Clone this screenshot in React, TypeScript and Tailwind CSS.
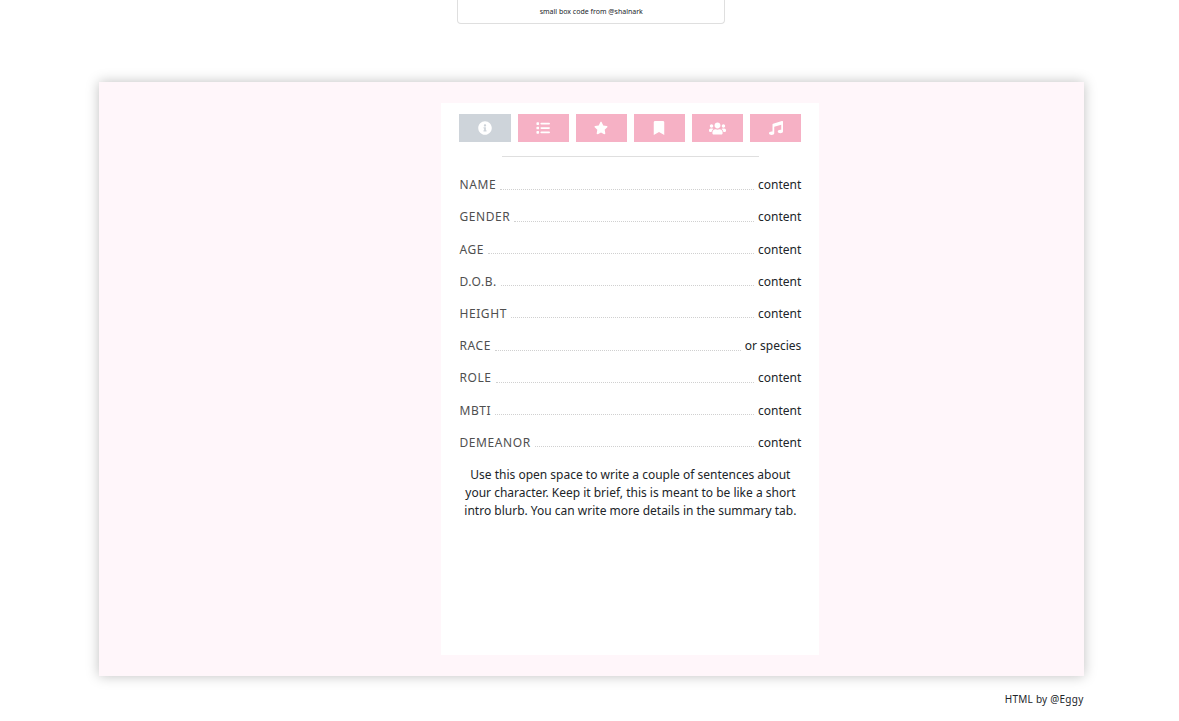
import { useState } from 'react'
import type { IconType } from 'react-icons'
import { FaBookmark, FaInfoCircle, FaMusic, FaStar, FaUsers } from 'react-icons/fa'
import { FaList } from 'react-icons/fa6'

interface Tab {
  id: string
  label: string
  icon: IconType
  iconClass?: string
}

const TABS: Tab[] = [
  { id: 'info', label: 'Info', icon: FaInfoCircle },
  { id: 'summary', label: 'Summary', icon: FaList },
  { id: 'traits', label: 'Traits', icon: FaStar },
  { id: 'story', label: 'Story', icon: FaBookmark },
  { id: 'links', label: 'Relationships', icon: FaUsers, iconClass: 'size-[17px]' },
  { id: 'music', label: 'Music', icon: FaMusic },
]

const FIELDS = [
  { label: 'NAME', value: 'content' },
  { label: 'GENDER', value: 'content' },
  { label: 'AGE', value: 'content' },
  { label: 'D.O.B.', value: 'content' },
  { label: 'HEIGHT', value: 'content' },
  { label: 'RACE', value: 'or species' },
  { label: 'ROLE', value: 'content' },
  { label: 'MBTI', value: 'content' },
  { label: 'DEMEANOR', value: 'content' },
]

function InfoPanel() {
  return (
    <>
      <dl className="flex h-[290px] flex-col">
        {FIELDS.map(({ label, value }) => (
          <div key={label} className="flex flex-1 items-center gap-1">
            <dt className="tracking-wider text-[#4f4f4f]">{label}</dt>
            <span className="mt-2 flex-1 border-b border-dotted border-[#d0d0d0]" />
            <dd>{value}</dd>
          </div>
        ))}
      </dl>
      <p className="mt-[7px] text-center">
        Use this open space to write a couple of sentences about your character. Keep it brief, this
        is meant to be like a short intro blurb. You can write more details in the summary tab.
      </p>
    </>
  )
}

export default function App() {
  const [active, setActive] = useState('info')

  return (
    <div className="flex flex-col bg-white pr-[8.1%] pl-[8.4%] font-['Noto_Sans','Open_Sans',sans-serif] text-[12px] leading-[18px] text-[#212529]">
      <header className="flex h-6 w-[268px] items-center justify-center self-center rounded-b border border-t-0 border-[#dfdfdf] text-[7px]">
        <p>
          small box code from <a href="#shalnark">@shalnark</a>
        </p>
      </header>

      <main className="mt-[58px] bg-[#fff6fa] p-[21px] shadow-[0_0_12px_rgba(0,0,0,0.25)]">
        <section className="ml-[34.1%] min-h-[552px] w-[40.1%] bg-white px-[18px] pt-[11px]">
          <div role="tablist" aria-label="Profile" className="grid grid-cols-6 gap-[7px]">
            {TABS.map(({ id, label, icon: Icon, iconClass }) => (
              <button
                key={id}
                type="button"
                role="tab"
                aria-label={label}
                aria-selected={active === id}
                onClick={() => setActive(id)}
                className={`flex h-7 items-center justify-center text-white ${
                  active === id ? 'bg-[#ced4da]' : 'bg-[#f6b1c5]'
                }`}
              >
                <Icon className={iconClass ?? 'size-[14px]'} />
              </button>
            ))}
          </div>
          <hr className="mx-auto mt-[14px] mb-3 w-3/4 border-[#dfdfdf]" />
          {active === 'info' && <InfoPanel />}
        </section>
      </main>

      <footer className="mt-[14px] text-right text-[10px] tracking-wide">
        HTML by <a href="#eggy">@Eggy</a>
      </footer>
    </div>
  )
}
